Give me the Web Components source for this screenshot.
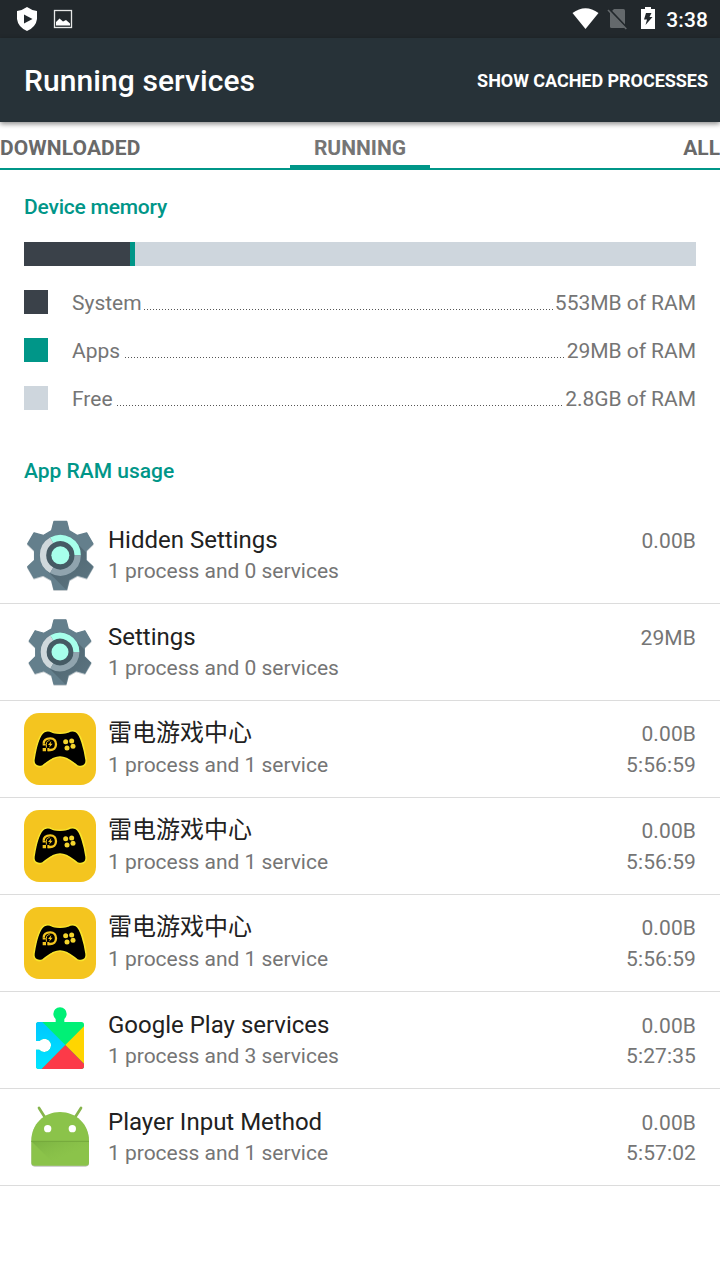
<!DOCTYPE html>
<html lang="en">
<head>
<meta charset="utf-8">
<title>Running services</title>
<style>
  body {
    margin: 0;
    background: #fff;
    font-family: Roboto, "Noto Sans CJK SC", sans-serif;
  }
</style>
</head>
<body>
<running-services></running-services>

<script>
const gearTeeth = () => {
  const tooth = [[-26, -74], [-19, -102], [19, -102], [26, -74]];
  const points = [];
  for (let i = 0; i < 6; i++) {
    const a = i * Math.PI / 3;
    tooth.forEach(([x, y]) => {
      points.push(`${(x * Math.cos(a) - y * Math.sin(a)).toFixed(1)},${(x * Math.sin(a) + y * Math.cos(a)).toFixed(1)}`);
    });
  }
  return points.join(' ');
};

const gear = (transform) => `
  <svg viewBox="42 27 216 216">
    <defs>
      <clipPath id="teeth"><polygon points="${gearTeeth()}"/></clipPath>
      <linearGradient id="shade" x1="0" y1="0" x2="1" y2="1">
        <stop offset="0" stop-color="#37474f" stop-opacity=".55"/>
        <stop offset="1" stop-color="#37474f" stop-opacity=".1"/>
      </linearGradient>
    </defs>
    <g transform="${transform}">
      <polygon points="${gearTeeth()}" fill="#455a64" opacity=".3" transform="translate(0 3)" stroke="#455a64" stroke-width="4" stroke-linejoin="round"/>
      <polygon points="${gearTeeth()}" fill="#647f8c" stroke="#647f8c" stroke-width="4" stroke-linejoin="round"/>
      <path d="M-43 43L43-43L120 34V120H34Z" fill="url(#shade)" clip-path="url(#teeth)"/>
      <circle r="62" fill="#546e7a"/>
      <circle r="44" fill="#455a64"/>
      <g fill="none" stroke-width="19">
        <path d="M-26 45A52 52 0 0 1-26-45" stroke="#cfd8dc"/>
        <path d="M-26-45A52 52 0 0 1 52 0" stroke="#a7ffeb"/>
        <path d="M52 0A52 52 0 0 1-26 45" stroke="#90a4ae"/>
      </g>
      <circle r="27" fill="#a7ffeb"/>
    </g>
  </svg>`;

const icons = {
  gear: gear('translate(151 136)'),
  'gear-small': gear('translate(150 135) scale(.945)'),
  gamepad: `
    <svg viewBox="42 33 216 216">
      <rect x="42" y="33" width="216" height="216" rx="46" fill="#f4c51f"/>
      <path d="M103 89C112 84 120 86 126 90C132 95 168 95 174 90C181 86 190 84 198 89C212 97 223 140 228 172C231 191 215 198 201 191C186 181 174 165 150 165C126 165 114 181 99 191C86 198 69 191 72 172C77 140 88 98 103 89Z" fill="#000" stroke="#f9e52b" stroke-width="4.500"/>
      <g fill="none" stroke="#f4c51f">
        <path d="M101 125C101 110 112 109 121 109C132 109 138 117 138 127C138 138 130 144 121 144H115" stroke-width="7"/>
        <path d="M109 137V127C109 118 114 116 119 116" stroke-width="3"/>
        <path d="M98 128H107" stroke-width="5"/>
      </g>
      <path d="M98 138H108V148H98ZM112 138H118V148H112ZM124 117L114 129H120L117 137L128 125H122Z" fill="#f4c51f"/>
      <g fill="#f4d52d">
        <circle cx="167" cy="119" r="7.5"/>
        <circle cx="185" cy="117" r="7.5"/>
        <circle cx="171" cy="138" r="7.5"/>
        <circle cx="189" cy="133" r="7.5"/>
      </g>
    </svg>`,
  puzzle: `
    <svg viewBox="42 27 216 216">
      <defs>
        <clipPath id="piece">
          <path d="M86 81H137V72A20 20 0 1 1 163 72V81H214Q222 81 222 89V214Q222 222 214 222H86Q78 222 78 214V164H88A20 20 0 1 0 88 138H78V89Q78 81 86 81Z"/>
        </clipPath>
        <linearGradient id="sky" x1="0" y1="0" x2="0" y2="1">
          <stop offset="0" stop-color="#00c3ff"/>
          <stop offset="1" stop-color="#00e5ff"/>
        </linearGradient>
      </defs>
      <g clip-path="url(#piece)">
        <rect x="78" y="30" width="144" height="195" fill="#00f076"/>
        <path d="M78 62L166 150L95 222H78Z" fill="url(#sky)"/>
        <path d="M166 150L222 94V206Z" fill="#ffd500"/>
        <path d="M95 222L166 150L238 222Z" fill="#fc3a48"/>
      </g>
    </svg>`,
  robot: `
    <svg viewBox="42 27 216 216">
      <defs>
        <linearGradient id="fold" x1="0" y1="0" x2="1" y2="1">
          <stop offset="0" stop-color="#689f38" stop-opacity=".5"/>
          <stop offset=".6" stop-color="#7cb342" stop-opacity="0"/>
        </linearGradient>
      </defs>
      <path d="M64 147C64 98 102 62 150 62S237 98 237 147V214Q237 224 227 224H74Q64 224 64 214Z" fill="#777" opacity=".45"/>
      <path d="M87 48L106 78M213 48L194 78" stroke="#86b44c" stroke-width="8" stroke-linecap="round"/>
      <path d="M64 147C64 96 102 60 150 60S237 96 237 147V212Q237 221 228 221H73Q64 221 64 212Z" fill="#8bc34a"/>
      <path d="M64 148H237V221H138Z" fill="url(#fold)"/>
      <path d="M64 148H237" stroke="#74a83b" stroke-width="3"/>
      <circle cx="113" cy="110" r="11" fill="#fff"/>
      <circle cx="187" cy="110" r="11" fill="#fff"/>
    </svg>`
};

class AppIcon extends HTMLElement {
  connectedCallback() {
    this.attachShadow({ mode: 'open' }).innerHTML = `
      <style>
        :host { display: block; width: 72px; height: 72px; }
        svg { display: block; width: 100%; height: 100%; }
      </style>
      ${icons[this.getAttribute('name')] || ''}
    `;
  }
}

class StatusBar extends HTMLElement {
  connectedCallback() {
    this.attachShadow({ mode: 'open' }).innerHTML = `
      <style>
        :host {
          display: flex;
          justify-content: space-between;
          height: 38px;
          background: #22282c;
          color: #fff;
        }
        svg { display: block; }
        .time {
          font-size: 21px;
          font-weight: 500;
          line-height: 40px;
          letter-spacing: 0.1px;
          padding-right: 12px;
        }
        .right { display: flex; }
      </style>
      <svg width="90" height="38">
        <path d="M27 7Q31 10 37 11V19Q36 27 27 31Q18 27 17 19V11Q23 10 27 7Z" fill="#fff"/>
        <path d="M24 14.5L32.5 19L24 23.5Z" fill="#22282c"/>
        <rect x="54.5" y="10.5" width="17" height="17" fill="none" stroke="#e6e7e7" stroke-width="1.3"/>
        <path d="M56 25.5V22L59.5 18.5L63 21.5L66 20L70 23.5V25.5Z" fill="#fff"/>
      </svg>
      <div class="right">
        <svg width="96" height="38">
          <path d="M2.5 13Q15.500 3.500 28.500 13L15.500 29Z" fill="#fff"/>
          <path d="M44 9H53.500Q55 9 55 10.500V26.500Q55 28 53.500 28H41.500Q40 28 40 26.500V13Z" fill="#64696c"/>
          <path d="M39 9L57 28" stroke="#22282c" stroke-width="2"/>
          <path d="M38 10L56.300 29" stroke="#64696c" stroke-width="1.600"/>
          <path d="M71 9H75V7H81V9H85V29H71Z" fill="#fff"/>
          <path d="M76 13H81.500L79.500 17H82.500L75.500 25L77 19.500H74Z" fill="#22282c"/>
        </svg>
        <div class="time">${this.getAttribute('time')}</div>
      </div>
    `;
  }
}

class AppBar extends HTMLElement {
  connectedCallback() {
    this.attachShadow({ mode: 'open' }).innerHTML = `
      <style>
        :host {
          display: flex;
          align-items: center;
          justify-content: space-between;
          height: 84px;
          box-sizing: border-box;
          padding: 0 12px 0 24px;
          background: #273238;
          color: #fff;
          position: relative;
          box-shadow: 0 2px 5px rgba(0,0,0,0.45);
        }
        .title { font-size: 30px; font-weight: 500; letter-spacing: 0.08px; }
        .action { font-size: 18px; font-weight: 700; letter-spacing: -0.04px; }
      </style>
      <div class="title"><slot></slot></div>
      <div class="action"><slot name="action"></slot></div>
    `;
  }
}

class TabStrip extends HTMLElement {
  connectedCallback() {
    this.attachShadow({ mode: 'open' }).innerHTML = `
      <style>
        :host {
          display: grid;
          grid-template-columns: 1fr 140px 1fr;
          height: 48px;
          box-sizing: border-box;
          border-bottom: 2px solid #009688;
          color: #696969;
          font-size: 21px;
          font-weight: 700;
          line-height: 53px;
        }
        .previous { letter-spacing: 0.1px; }
        .current {
          color: #757575;
          text-align: center;
          height: 43px;
          border-bottom: 3px solid #009688;
        }
        .next { text-align: right; }
      </style>
      <div class="previous"><slot name="previous"></slot></div>
      <div class="current"><slot></slot></div>
      <div class="next"><slot name="next"></slot></div>
    `;
  }
}

class SectionTitle extends HTMLElement {
  connectedCallback() {
    this.attachShadow({ mode: 'open' }).innerHTML = `
      <style>
        :host {
          display: block;
          height: 72px;
          padding: 0 24px;
          color: #009688;
          font-size: 21px;
          font-weight: 500;
          line-height: 74px;
        }
      </style>
      <slot></slot>
    `;
  }
}

class MemoryBar extends HTMLElement {
  connectedCallback() {
    this.attachShadow({ mode: 'open' }).innerHTML = `
      <style>
        :host {
          display: flex;
          height: 24px;
          margin: 0 24px 12px;
          background: #ced6dd;
        }
        .system { width: ${this.getAttribute('system')}px; background: #3a4149; }
        .apps { width: ${this.getAttribute('apps')}px; background: #009688; }
      </style>
      <div class="system"></div>
      <div class="apps"></div>
    `;
  }
}

class MemoryRow extends HTMLElement {
  connectedCallback() {
    this.attachShadow({ mode: 'open' }).innerHTML = `
      <style>
        :host {
          display: flex;
          align-items: center;
          height: 48px;
          padding: 0 24px;
          color: #757575;
          font-size: 21px;
          line-height: 50px;
        }
        .swatch {
          width: 24px;
          height: 24px;
          margin-right: 24px;
          background: ${this.getAttribute('color')};
        }
        .label, .value { padding-top: 2px; }
        .label { width: ${this.getAttribute('label-width')}px; }
        .value { letter-spacing: -0.03px; }
        .dots {
          flex: 1;
          height: 1px;
          margin: 15px 1px 0 0;
          background: repeating-linear-gradient(90deg, #555 0 1px, transparent 1px 3px);
        }
      </style>
      <div class="swatch"></div>
      <div class="label"><slot></slot></div>
      <div class="dots"></div>
      <div class="value">${this.getAttribute('value')}</div>
    `;
  }
}

class ProcessItem extends HTMLElement {
  connectedCallback() {
    const uptime = this.getAttribute('uptime') || '';
    this.attachShadow({ mode: 'open' }).innerHTML = `
      <style>
        :host {
          display: flex;
          height: 96px;
          padding: 0 24px;
          border-bottom: 1px solid #dcdcdc;
          color: #757575;
          font-size: 21px;
        }
        app-icon { margin: 12px 12px 0 0; }
        .text { flex: 1; padding-top: 17px; }
        .name {
          height: 32px;
          line-height: 32px;
          font-size: 24px;
          color: #212121;
        }
        .detail { line-height: 30px; letter-spacing: -0.02px; }
        .side { padding-top: 19px; text-align: right; line-height: 30px; }
        .side div { height: 30px; letter-spacing: 0.1px; }
        :host(:lang(zh)) .text { padding-top: 16px; }
        :host(:lang(zh)) .name { height: 33px; }
        :host(:lang(zh)) .side { padding-top: 18px; }
        :host(:lang(zh)) .side div + div { padding-top: 1px; }
      </style>
      <app-icon name="${this.getAttribute('icon')}"></app-icon>
      <div class="text">
        <div class="name"><slot></slot></div>
        <div class="detail">${this.getAttribute('detail')}</div>
      </div>
      <div class="side">
        <div>${this.getAttribute('size')}</div>
        <div>${uptime}</div>
      </div>
    `;
  }
}

class RunningServices extends HTMLElement {
  connectedCallback() {
    this.attachShadow({ mode: 'open' }).innerHTML = `
      <style>
        :host { display: block; height: 1280px; overflow: hidden; }
        .memory { letter-spacing: -0.2px; }
        .usage { margin-top: 13px; line-height: 73px; }
      </style>
      <status-bar time="3:38"></status-bar>
      <app-bar>Running services<span slot="action">SHOW CACHED PROCESSES</span></app-bar>
      <tab-strip>
        <span slot="previous">DOWNLOADED</span>
        RUNNING
        <span slot="next">ALL</span>
      </tab-strip>
      <section-title class="memory">Device memory</section-title>
      <memory-bar system="106" apps="5"></memory-bar>
      <memory-row color="#3a4149" label-width="72" value="553MB of RAM">System</memory-row>
      <memory-row color="#009688" label-width="53" value="29MB of RAM">Apps</memory-row>
      <memory-row color="#ced6dd" label-width="45" value="2.8GB of RAM">Free</memory-row>
      <section-title class="usage">App RAM usage</section-title>
      <process-item icon="gear" detail="1 process and 0 services" size="0.00B">Hidden Settings</process-item>
      <process-item icon="gear-small" detail="1 process and 0 services" size="29MB">Settings</process-item>
      <process-item lang="zh" icon="gamepad" detail="1 process and 1 service" size="0.00B" uptime="5:56:59">雷电游戏中心</process-item>
      <process-item lang="zh" icon="gamepad" detail="1 process and 1 service" size="0.00B" uptime="5:56:59">雷电游戏中心</process-item>
      <process-item lang="zh" icon="gamepad" detail="1 process and 1 service" size="0.00B" uptime="5:56:59">雷电游戏中心</process-item>
      <process-item icon="puzzle" detail="1 process and 3 services" size="0.00B" uptime="5:27:35">Google Play services</process-item>
      <process-item icon="robot" detail="1 process and 1 service" size="0.00B" uptime="5:57:02">Player Input Method</process-item>
    `;
  }
}

customElements.define('app-icon', AppIcon);
customElements.define('status-bar', StatusBar);
customElements.define('app-bar', AppBar);
customElements.define('tab-strip', TabStrip);
customElements.define('section-title', SectionTitle);
customElements.define('memory-bar', MemoryBar);
customElements.define('memory-row', MemoryRow);
customElements.define('process-item', ProcessItem);
customElements.define('running-services', RunningServices);
</script>
</body>
</html>
